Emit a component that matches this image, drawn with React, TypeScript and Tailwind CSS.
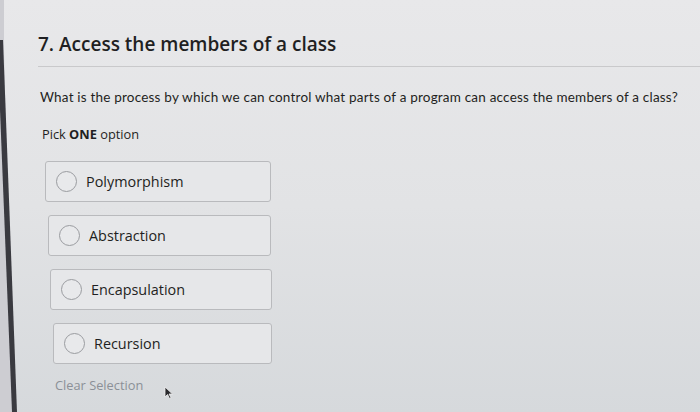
import React from "react";

const options = [
  { label: "Polymorphism", ml: "ml-[45px]", w: "w-[226px]" },
  { label: "Abstraction", ml: "ml-[48px]", w: "w-[223px]" },
  { label: "Encapsulation", ml: "ml-[50px]", w: "w-[222px]" },
  { label: "Recursion", ml: "ml-[53px]", w: "w-[219px]" },
];

export default function App() {
  return (
    <div className="relative w-[700px] h-[412px] overflow-hidden bg-gradient-to-b from-[#e8e8ea] via-[#e2e3e5] to-[#d6d9dc] text-[#1f1f22]">
      {/* slanted monitor edge */}
      <svg className="absolute left-0 top-0" width="20" height="412" viewBox="0 0 20 412">
        <polygon points="0,0 4,0 4,50 13,412 0,412" fill="#cdcdd2" />
        <polygon points="0,40 3,40 17,412 12,412 0,110" fill="#3a3a40" />
      </svg>

      <div className="flex flex-col pl-[38px] pt-[30px]">
        <h1
          className="text-[19px] font-semibold leading-[28px]"
          style={{ fontFamily: '"Open Sans", sans-serif' }}
        >
          7. Access the members of a class
        </h1>
        <div className="mt-[8px] h-px bg-[#c9c9cb]" />
        <p
          className="mt-[22px] ml-[2px] text-[13.5px] leading-[16px] tracking-[0.2px]"
          style={{ fontFamily: 'Lato, sans-serif' }}
        >
          What is the process by which we can control what parts of a program can access the members of a class?
        </p>
        <p
          className="mt-[21px] ml-[4px] text-[12.8px] leading-[16px]"
          style={{ fontFamily: '"Open Sans", sans-serif' }}
        >
          Pick <span className="font-bold">ONE</span> option
        </p>

        <div className="mt-[19px] flex flex-col gap-[13px] -ml-[38px]">
          {options.map((o) => (
            <div
              key={o.label}
              className={`${o.ml} ${o.w} h-[41px] flex items-center rounded-[3px] border border-[#b9babd] bg-[#e6e7e9]`}
            >
              <span className="ml-[10px] w-[21px] h-[21px] rounded-full border border-[#9a9ca0] bg-[#e8e9eb]" />
              <span
                className="ml-[9px] text-[14.4px]"
                style={{ fontFamily: '"Open Sans", sans-serif' }}
              >
                {o.label}
              </span>
            </div>
          ))}
        </div>

        <div
          className="mt-[12px] ml-[17px] text-[12.8px] text-[#8b9097]"
          style={{ fontFamily: '"Open Sans", sans-serif' }}
        >
          Clear Selection
        </div>
      </div>

      {/* mouse cursor */}
      <svg className="absolute left-[164px] top-[386px]" width="10" height="14" viewBox="0 0 10 14">
        <path d="M1 1 L1 11 L3.5 8.5 L5.5 12.5 L7 11.8 L5 8 L8.5 8 Z" fill="#2a2a2e" stroke="#f0f0f0" strokeWidth="0.8" />
      </svg>
    </div>
  );
}
